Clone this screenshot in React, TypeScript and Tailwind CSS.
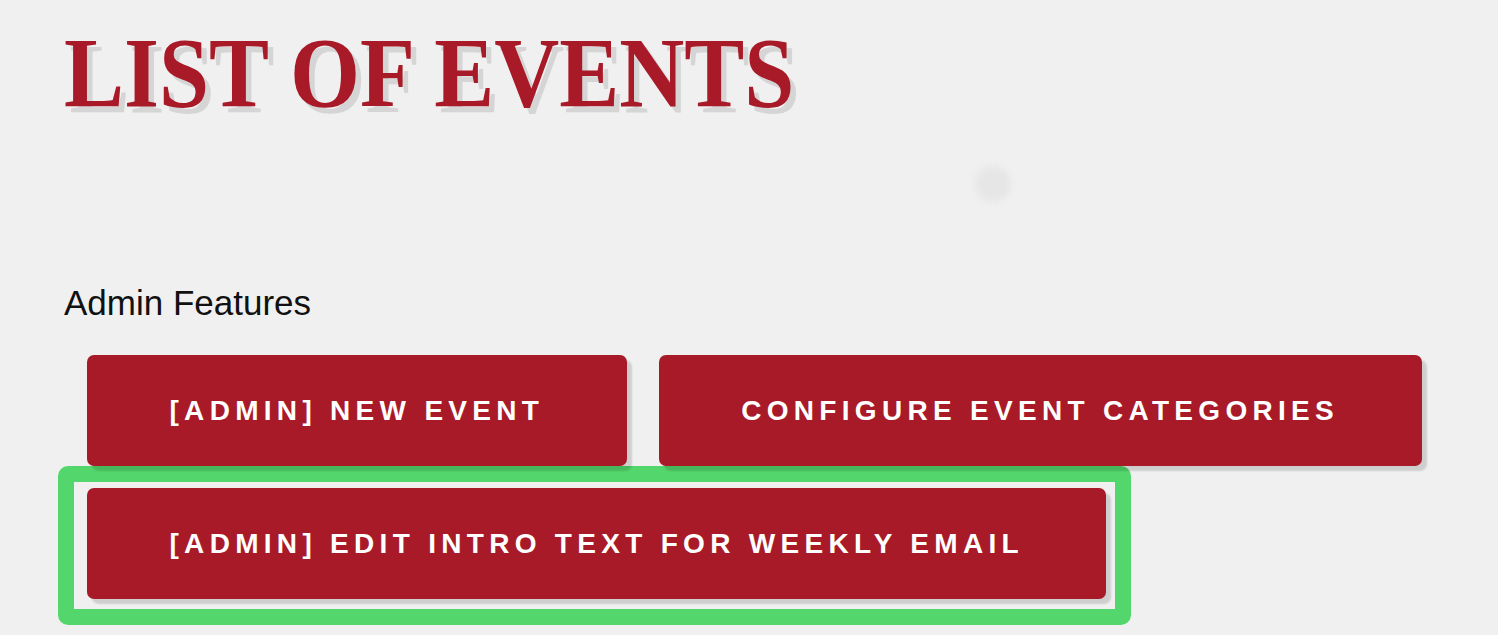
import React from "react";

const AdminButton = ({ label }: { label: string }) => {
    return (
        <button
            type="button"
            className="flex h-[111px] items-center justify-center rounded-[7px] bg-[#a81a27] px-[82.5px] text-[28px] font-bold uppercase tracking-[5.3px] text-white shadow-[5px_5px_2px_rgba(0,0,0,0.14)]"
            style={{ fontFamily: '"Liberation Sans", Arial, sans-serif' }}
        >
            {label}
        </button>
    );
};

const App = () => {
    return (
        <div className="min-h-screen bg-[#f0f0f0] pl-[64px] pt-[23px]" style={{ fontFamily: '"Liberation Sans", Arial, sans-serif' }}>
            <h1
                className="origin-left scale-x-[0.9] text-[100px] font-bold uppercase leading-none text-[#a81a27] [text-shadow:6px_6px_0_#d5d5d5]"
                style={{ fontFamily: '"Liberation Serif", serif' }}
            >
                List of Events
            </h1>

            {/* faint loading blob */}
            <div className="ml-[911px] mt-[43px] h-9 w-9 rounded-full bg-[#e6e6e6] blur-[3px]" />

            <h2 className="mt-[83px] text-[35px] leading-none text-[#111]">Admin Features</h2>

            <section className="mt-[35px]">
                <div className="flex gap-8 pl-[23px]">
                    <AdminButton label="[Admin] New Event" />
                    <AdminButton label="Configure Event Categories" />
                </div>

                {/* highlighted row */}
                <div className="-ml-[6px] w-fit rounded-[10px] border-[16px] border-[#53d66b] pb-[10px] pl-[13px] pr-[9px] pt-[6px]">
                    <AdminButton label="[Admin] Edit Intro Text for Weekly Email" />
                </div>
            </section>
        </div>
    );
};

export default App;
